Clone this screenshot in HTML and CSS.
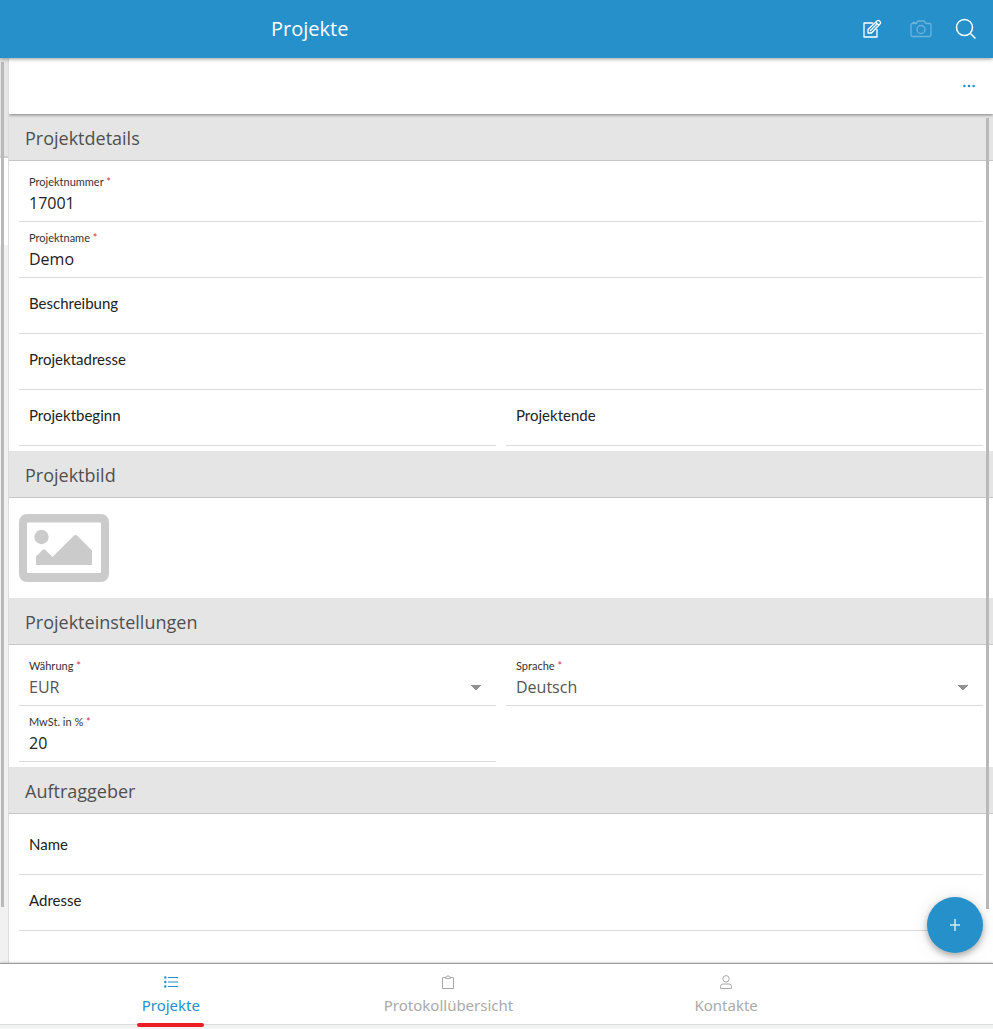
FILE: index.html
```
<!DOCTYPE html>
<html lang="de">

<head>
    <meta charset="utf-8">
    <meta name="viewport" content="width=device-width, initial-scale=1.0">
    <title>Projekte</title>
    <link rel="stylesheet" href="styles.css">
</head>
<body>

    <!-- Header -->
    <header class="topbar">
        <h1>Projekte</h1>
        <button type="button" class="icon-button" aria-label="Bearbeiten">
            <svg width="20" height="20" viewBox="0 0 20 20" fill="none" stroke="currentColor" stroke-width="1.3" stroke-linejoin="round">
                <path d="M11 4H2v14h13V10"/>
                <path d="M6 14v-3.5L15.2 1.8a1.4 1.4 0 0 1 2 0l1 1a1.4 1.4 0 0 1 0 2L9.5 14zM13.8 3.2l3 3M8 12l7.5-7.5"/>
            </svg>
        </button>
        <button type="button" class="icon-button camera" aria-label="Kamera" disabled>
            <svg width="22" height="18" viewBox="0 0 22 18" fill="none" stroke="currentColor" stroke-width="1.3" stroke-linejoin="round">
                <path d="M2.5 3.5h3.7L8 1h6l1.8 2.5h3.7c1 0 1.5.5 1.5 1.5v10c0 1-.5 1.5-1.5 1.5h-17C1.5 16.5 1 16 1 15V5c0-1 .5-1.5 1.5-1.5zM3 3.5V2.3h2v1.2"/>
                <circle cx="11" cy="9.5" r="4"/>
            </svg>
        </button>
        <button type="button" class="icon-button" aria-label="Suchen">
            <svg width="22" height="22" viewBox="0 0 22 22" fill="none" stroke="currentColor" stroke-width="1.5">
                <circle cx="9.5" cy="9.5" r="8"/>
                <path d="M15.2 15.2l5.3 5.3"/>
            </svg>
        </button>
    </header>

    <div class="content">
        <!-- Edge of the project list -->
        <aside class="list">
            <div class="list-head"></div>
            <div class="list-item"></div>
            <div class="scrollbar"></div>
        </aside>

        <main class="detail">
            <div class="toolbar">
                <button type="button" class="more" aria-label="Mehr">
                    <svg width="12" height="4" viewBox="0 0 12 4" fill="currentColor">
                        <circle cx="1.4" cy="2" r="1.3"/><circle cx="6" cy="2" r="1.3"/><circle cx="10.6" cy="2" r="1.3"/>
                    </svg>
                </button>
            </div>

            <form class="form">
                <h2>Projektdetails</h2>
                <div class="fields">
                    <div class="field wide">
                        <label for="nummer">Projektnummer <span>*</span></label>
                        <input type="text" id="nummer" value="17001">
                    </div>
                    <div class="field wide">
                        <label for="projektname">Projektname <span>*</span></label>
                        <input type="text" id="projektname" value="Demo">
                    </div>
                    <div class="field wide empty">
                        <label for="beschreibung">Beschreibung</label>
                        <input type="text" id="beschreibung">
                    </div>
                    <div class="field wide empty">
                        <label for="projektadresse">Projektadresse</label>
                        <input type="text" id="projektadresse">
                    </div>
                    <div class="field empty">
                        <label for="beginn">Projektbeginn</label>
                        <input type="text" id="beginn">
                    </div>
                    <div class="field empty">
                        <label for="ende">Projektende</label>
                        <input type="text" id="ende">
                    </div>
                </div>

                <h2>Projektbild</h2>
                <div class="picture">
                    <svg width="90" height="68" viewBox="0 0 90 68" fill="#cbcbcb">
                        <path fill-rule="evenodd" d="M8 0h74a8 8 0 0 1 8 8v52a8 8 0 0 1-8 8H8a8 8 0 0 1-8-8V8a8 8 0 0 1 8-8zM9 8.5Q8 8.5 8 9.5V58Q8 59 9 59H81Q82 59 82 58V9.5Q82 8.5 81 8.5z"/>
                        <circle cx="22.5" cy="23" r="7.2"/>
                        <path d="M17 51V42.5L23.5 36Q25 34.5 26.5 36L33.5 43 54.5 22Q56.5 20 58.5 22L73 36.5V51z"/>
                    </svg>
                </div>

                <h2>Projekteinstellungen</h2>
                <div class="fields">
                    <div class="field">
                        <label for="waehrung">Währung <span>*</span></label>
                        <select id="waehrung"><option>EUR</option></select>
                    </div>
                    <div class="field">
                        <label for="sprache">Sprache <span>*</span></label>
                        <select id="sprache"><option>Deutsch</option></select>
                    </div>
                    <div class="field">
                        <label for="mwst">MwSt. in % <span>*</span></label>
                        <input type="text" id="mwst" value="20">
                    </div>
                </div>

                <h2>Auftraggeber</h2>
                <div class="fields">
                    <div class="field wide empty">
                        <label for="name">Name</label>
                        <input type="text" id="name">
                    </div>
                    <div class="field wide empty">
                        <label for="adresse">Adresse</label>
                        <input type="text" id="adresse">
                    </div>
                </div>
            </form>

            <div class="scrollbar"></div>
            <button type="button" class="add" aria-label="Hinzufügen">
                <svg width="10" height="12" viewBox="0 0 10 12" stroke="currentColor" stroke-width="1.5"><path d="M5 0v12M0 6h10"/></svg>
            </button>
        </main>
    </div>

    <!-- Tabs -->
    <nav class="tabs">
        <a href="#projekte" class="tab active">
            <svg width="14" height="12" viewBox="0 0 14 12" fill="currentColor">
                <circle cx="1.3" cy="1.5" r="1.2"/><circle cx="1.3" cy="6" r="1.2"/><circle cx="1.3" cy="10.5" r="1.2"/>
                <path d="M4 1h10v1H4zM4 5.5h10v1H4zM4 10h10v1H4z"/>
            </svg>
            Projekte
        </a>
        <a href="#protokolle" class="tab">
            <svg width="12" height="14" viewBox="0 0 12 14" fill="none" stroke="currentColor">
                <path d="M3.5 2.5h-3v11h11v-11h-3M3.5 3.5v-1.5h1.3a1.2 1.2 0 0 1 2.4 0h1.3v1.5z"/>
            </svg>
            Protokollübersicht
        </a>
        <a href="#kontakte" class="tab">
            <svg width="12" height="14" viewBox="0 0 12 14" fill="none" stroke="currentColor">
                <circle cx="6" cy="3.8" r="3.2"/>
                <path d="M.5 13.5v-2q0-2.500 2.500-2.500h6q2.500 0 2.500 2.500v2z"/>
            </svg>
            Kontakte
        </a>
    </nav>

</body>

</html>
```
FILE: styles.css
```
/* General */
* {
    box-sizing: border-box;
}

body {
    margin: 0;
    height: 100vh;
    display: flex;
    flex-direction: column;
    background-color: #f1f3f3;
    font-family: Lato, "Open Sans", sans-serif;
    color: #222;
}

button {
    padding: 0;
    border: none;
    background: none;
    cursor: pointer;
}

svg {
    display: block;
}

/* Header */
.topbar {
    position: relative;
    z-index: 2;
    flex: none;
    display: flex;
    align-items: center;
    height: 58px;
    padding: 0 16px 0 271px;
    background-color: #2690ca;
    color: white;
    box-shadow: 0 1px 4px rgba(0, 0, 0, 0.4);
}

.topbar h1 {
    flex: 1;
    margin: 0;
    font-family: "Open Sans", sans-serif;
    font-size: 20px;
    font-weight: normal;
    line-height: 24px;
}

.icon-button {
    color: white;
    margin-left: 23px;
}

.icon-button.camera {
    margin-left: 28px;
    color: #6cb3dc;
}

/* Content */
.content {
    flex: 1;
    min-height: 0;
    display: flex;
    overflow: hidden;
}

.list {
    position: relative;
    z-index: 1;
    flex: none;
    width: 9px;
    background-color: #f1f1f1;
    border-right: 1px solid #dcdcdc;
}

.list-head {
    height: 100px;
    background-color: #e5e5e5;
    border-bottom: 2px solid #d0d0d0;
}

.list-item {
    height: 87px;
    background-color: white;
}

.scrollbar {
    position: absolute;
    top: 60px;
    right: 4px;
    bottom: 54px;
    width: 3px;
    background-color: #b9b9b9;
}

.list .scrollbar {
    top: 4px;
    right: 4px;
    bottom: 56px;
}

.detail {
    position: relative;
    flex: 1;
    min-width: 0;
    background-color: white;
}

.toolbar {
    position: relative;
    display: flex;
    justify-content: flex-end;
    align-items: center;
    height: 56px;
    padding-right: 18px;
    background-color: white;
    box-shadow: 0 1px 3px rgba(0, 0, 0, 0.45);
}

.more {
    color: #2690ca;
}

/* Form */
.form h2 {
    margin: 0;
    height: 47px;
    padding: 0 16px;
    border-bottom: 1px solid #c6c6c6;
    background-color: #e5e5e5;
    color: #505050;
    font-family: "Open Sans", sans-serif;
    font-size: 18px;
    font-weight: 500;
    line-height: 48px;
}

.fields {
    display: grid;
    grid-template-columns: 1fr 1fr;
    column-gap: 10px;
    padding: 5px 10px;
}

.field {
    height: 56px;
    padding: 9px 10px 0;
    border-bottom: 1px solid #dadada;
}

.field.wide {
    grid-column: span 2;
}

.field label {
    display: block;
    color: #333;
    font-size: 11px;
    line-height: 14px;
}

.field label span {
    color: #d2304f;
}

.field input,
.field select {
    display: block;
    width: 100%;
    height: 28px;
    padding: 0;
    border: none;
    outline: none;
    background: none;
    color: #222;
    font-family: "Open Sans", sans-serif;
    font-size: 16px;
}

.field select {
    appearance: none;
    color: #555;
    background: linear-gradient(to bottom right, #929292 50%, transparent 51%) right 5px center / 5px 5px no-repeat,
        linear-gradient(to bottom left, #929292 50%, transparent 51%) right 10px center / 5px 5px no-repeat;
}

/* Label lies in the empty input */
.field.empty {
    display: grid;
    padding-top: 11px;
}

.field.empty label,
.field.empty input {
    grid-area: 1 / 1;
}

.field.empty label {
    color: #222;
    font-size: 15px;
    line-height: 28px;
}

.picture {
    padding: 16px 10px;
}

/* Add button */
.add {
    position: absolute;
    right: 10px;
    bottom: 10px;
    display: flex;
    align-items: center;
    justify-content: center;
    width: 56px;
    height: 56px;
    border-radius: 50%;
    background-color: #2690ca;
    color: #d4e9f5;
    box-shadow: 0 3px 6px rgba(0, 0, 0, 0.3), 0 1px 18px rgba(0, 0, 0, 0.1);
}

/* Tabs */
.tabs {
    flex: none;
    display: grid;
    grid-template-columns: repeat(3, 1fr);
    height: 62px;
    margin-bottom: 4px;
    padding: 0 128px 0 32px;
    border-top: 1px solid #999;
    border-bottom: 1px solid #dcdcdc;
    background-color: white;
    box-shadow: 0 -1px 2px rgba(0, 0, 0, 0.15);
    z-index: 1;
}

.tab {
    position: relative;
    display: flex;
    flex-direction: column;
    align-items: center;
    gap: 6px;
    padding-top: 11px;
    color: #aaa;
    font-family: "Noto Sans", sans-serif;
    font-size: 15px;
    line-height: 20px;
    text-decoration: none;
}

.tab svg {
    height: 14px;
}

.tab.active {
    color: #2690ca;
}

.tab.active::after {
    content: "";
    position: absolute;
    bottom: -3px;
    width: 67px;
    height: 4px;
    border-radius: 2px;
    background-color: #ec1c24;
}
```
